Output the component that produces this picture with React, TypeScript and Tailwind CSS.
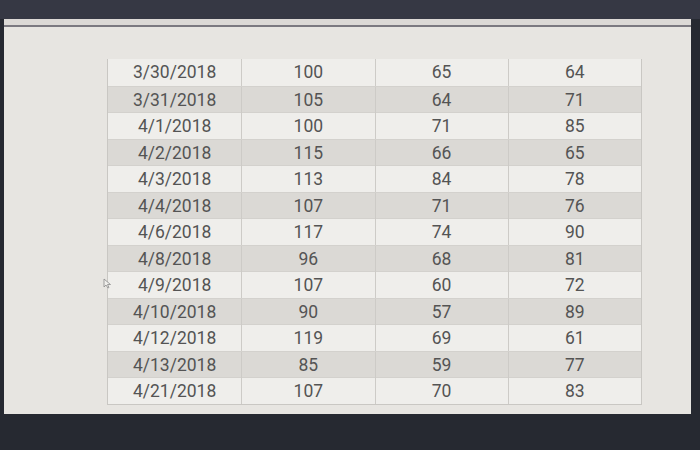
import React from "react";

const rows: [string, number, number, number][] = [
  ["3/30/2018", 100, 65, 64],
  ["3/31/2018", 105, 64, 71],
  ["4/1/2018", 100, 71, 85],
  ["4/2/2018", 115, 66, 65],
  ["4/3/2018", 113, 84, 78],
  ["4/4/2018", 107, 71, 76],
  ["4/6/2018", 117, 74, 90],
  ["4/8/2018", 96, 68, 81],
  ["4/9/2018", 107, 60, 72],
  ["4/10/2018", 90, 57, 89],
  ["4/12/2018", 119, 69, 61],
  ["4/13/2018", 85, 59, 77],
  ["4/21/2018", 107, 70, 83],
];

export default function App() {
  return (
    <div
      className="relative w-[700px] h-[450px] bg-[#262931] flex flex-col overflow-hidden"
      style={{ fontFamily: "Roboto, 'Liberation Sans', sans-serif" }}
    >
      <div className="h-[19px] bg-[#363844] shrink-0" />
      <div className="h-[395px] ml-[4px] mr-[9px] bg-[#e7e5e1] flex flex-col shrink-0">
        <div className="h-[6px] bg-[#dcd9d6]" />
        <div className="h-[2px] bg-[#7b7980]" />
        <div className="pt-[32px] pl-[103px]">
          <div className="w-[535px] border-l border-r border-b border-[#c9c7c3]">
            {rows.map((r, i) => (
              <div
                key={i}
                className={`grid grid-cols-4 h-[26.5px] border-t border-[#d3d1cd] first:border-t-0 ${
                  i % 2 === 1 ? "bg-[#dbd9d5]" : "bg-[#efeeeb]"
                }`}
              >
                {r.map((c, j) => (
                  <div
                    key={j}
                    className={`flex items-center justify-center text-[17.5px] text-[#545454] ${
                      j > 0 ? "border-l border-[#cdcbc7]" : ""
                    }`}
                  >
                    {c}
                  </div>
                ))}
              </div>
            ))}
          </div>
        </div>
      </div>
      <svg
        className="absolute left-[103px] top-[278px]"
        width="9"
        height="11"
        viewBox="0 0 9 11"
      >
        <path d="M1 1 L1 9 L3 7 L5 10 L6 9.5 L4.5 6.5 L7.5 6.5 Z" fill="#f0efec" stroke="#8a8a8a" strokeWidth="0.8" />
      </svg>
    </div>
  );
}
